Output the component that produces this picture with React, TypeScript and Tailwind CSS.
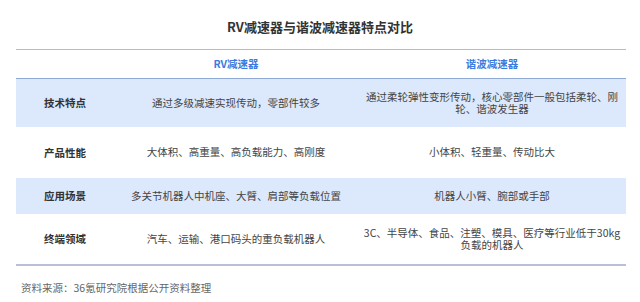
import React from "react";

const rows = [
  { label: "技术特点", a: "通过多级减速实现传动，零部件较多", b: "通过柔轮弹性变形传动，核心零部件一般包括柔轮、刚轮、谐波发生器", h: "h-[48px]", blue: true },
  { label: "产品性能", a: "大体积、高重量、高负载能力、高刚度", b: "小体积、轻重量、传动比大", h: "h-[51px]", blue: false },
  { label: "应用场景", a: "多关节机器人中机座、大臂、肩部等负载位置", b: "机器人小臂、腕部或手部", h: "h-[36px]", blue: true },
  { label: "终端领域", a: "汽车、运输、港口码头的重负载机器人", b: "3C、半导体、食品、注塑、模具、医疗等行业低于30kg负载的机器人", h: "h-[50px]", blue: false },
];

export default function App() {
  return (
    <div
      className="w-[640px] h-[302px] bg-white relative overflow-hidden"
      style={{ fontFamily: '"Noto Sans CJK SC", "Noto Sans", sans-serif' }}
    >
      <div className="h-[49px] flex items-start justify-center pt-[18px]">
        <div className="text-[13px] leading-[18px] font-bold text-[#333333]">RV减速器与谐波减速器特点对比</div>
      </div>
      <div className="ml-[16px] w-[610px] border-t border-[#a9bde0]">
        <div className="flex h-[29px] items-center border-b border-[#8fa9d6] text-[10.5px] font-semibold text-[#3b7be0]">
          <div className="w-[98px]" />
          <div className="w-[244px] text-center">RV减速器</div>
          <div className="w-[268px] text-center">谐波减速器</div>
        </div>
        {rows.map((r, i) => (
          <div key={i} className={`flex items-center ${r.h} ${r.blue ? "bg-[#dce8fb]" : "bg-white"}`}>
            <div className="w-[98px] text-center text-[10.5px] font-bold text-[#333333]">{r.label}</div>
            <div className="w-[244px] text-center text-[10.5px] leading-[12.5px] text-[#444444]">{r.a}</div>
            <div className="w-[268px] px-[4px] text-center text-[10.5px] leading-[12.5px] text-[#444444]">{r.b}</div>
          </div>
        ))}
        <div className="h-[2px] bg-[#b9bedd]" />
      </div>
      <div className="ml-[21px] mt-[15px] text-[10.5px] leading-[14px] text-[#666666]">资料来源：36氪研究院根据公开资料整理</div>
    </div>
  );
}
